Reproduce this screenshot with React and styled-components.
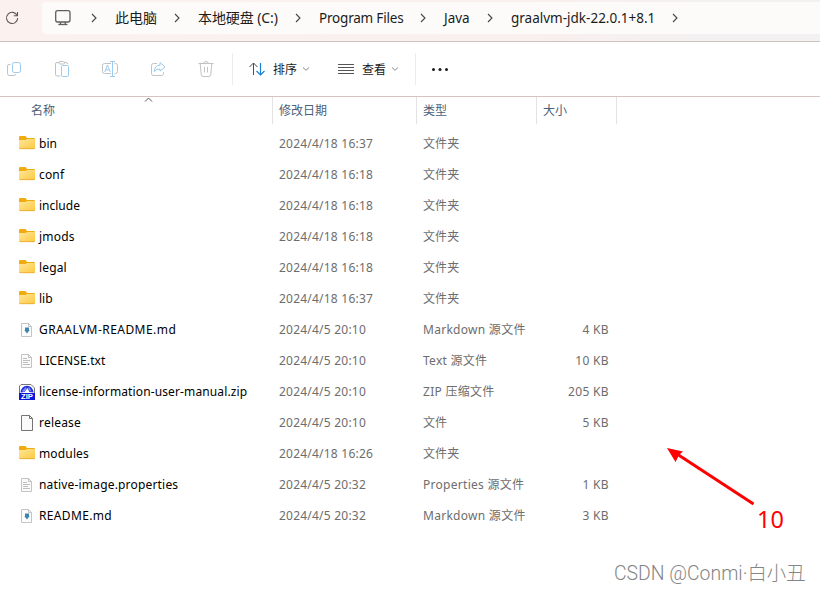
import React from "react";
import styled, { createGlobalStyle } from "styled-components";

const GlobalStyle = createGlobalStyle`
  * {
    box-sizing: border-box;
  }

  body {
    margin: 0;
    background: #fff;
    overflow: hidden;
    font-family: "Noto Sans", "Noto Sans CJK SC", sans-serif;
    font-size: 12px;
  }

  svg {
    display: block;
    flex: none;
  }
`;

const Window = styled.div`
  position: relative;
  width: 820px;
  height: 592px;
  background: #fff;
  overflow: hidden;
`;

const AddressBar = styled.div`
  height: 42px;
  display: flex;
  align-items: flex-start;
  padding: 2px 0 0 4px;
  background: linear-gradient(100deg, #fbf1ee 0%, #faf0ed 65%, #f3f1f1 85%);
  border-bottom: 1px solid #cfc3c1;
`;

const RefreshButton = styled.div`
  width: 38px;
  height: 31px;
  display: flex;
  align-items: center;
`;

const Breadcrumbs = styled.div`
  flex: 1;
  height: 32px;
  display: flex;
  align-items: center;
  padding-left: 12px;
  background: #fdfbfa;
  border-radius: 4px 0 0 4px;
`;

const Crumb = styled.span`
  width: ${(props) => props.$width}px;
  padding-left: 1px;
  font-size: ${(props) => props.$size || 13.5}px;
  line-height: 32px;
  letter-spacing: ${(props) => props.$spacing || 0}px;
  color: #1b1b1b;
  white-space: nowrap;
`;

const CrumbArrow = styled.span`
  width: 41px;
  display: flex;
  justify-content: center;
`;

const CommandBar = styled.div`
  height: 55px;
  display: flex;
  align-items: center;
  padding-left: 6px;
  border-bottom: 1px solid #d5c4c0;
`;

const IconButton = styled.div`
  width: 48px;
  height: 32px;
  display: flex;
  align-items: center;
`;

const Separator = styled.div`
  width: 1px;
  height: 32px;
  margin-left: ${(props) => props.$before}px;
  margin-right: ${(props) => props.$after}px;
  background: #ebebeb;
`;

const MenuButton = styled.div`
  width: ${(props) => props.$width}px;
  display: flex;
  align-items: center;
  color: #1b1b1b;
`;

const MenuLabel = styled.span`
  width: 24px;
  margin: 2px 5px 0 7px;
  line-height: 20px;
  white-space: nowrap;
`;

const HeaderRow = styled.div`
  height: 27px;
  display: flex;
`;

const HeaderCell = styled.div`
  position: relative;
  width: ${(props) => props.$width}px;
  padding-left: ${(props) => props.$indent || 6}px;
  border-right: 1px solid #e3e3e3;
  line-height: 27px;
  color: #4c607a;
`;

const SortMark = styled.span`
  position: absolute;
  top: 0;
  left: 144px;
`;

const FileList = styled.div`
  padding-top: 4px;
`;

const FileRow = styled.div`
  height: 31px;
  display: flex;
  align-items: center;
  line-height: 31px;
  white-space: nowrap;
  color: #6d6d6d;
`;

const NameCell = styled.div`
  width: 279px;
  display: flex;
  align-items: center;
  gap: 4px;
  padding-left: 19px;
  color: #000;
`;

const Name = styled.span`
  letter-spacing: ${(props) => props.$spacing || 0}px;
`;

const DateCell = styled.div`
  width: 144px;
  letter-spacing: 0.22px;
`;

const TypeCell = styled.div`
  width: 120px;
  letter-spacing: ${(props) => (props.$latin ? 0.28 : 0.1)}px;
`;

const SizeCell = styled.div`
  width: 66px;
  text-align: right;
  letter-spacing: 0.35px;
`;

const Annotation = styled.div`
  position: absolute;
  left: 665px;
  top: 444px;
`;

const AnnotationLabel = styled.div`
  position: absolute;
  left: 92px;
  top: 59px;
  font-size: 23.5px;
  line-height: 32px;
  color: #f00;
`;

const Watermark = styled.div`
  position: absolute;
  left: 614px;
  top: 561px;
  font-family: Roboto, "Noto Sans CJK SC", sans-serif;
  font-size: 19.4px;
  font-weight: 300;
  line-height: 26px;
  white-space: nowrap;
  color: #858585;
`;

const crumbs = [
  { label: "此电脑", width: 42, size: 14 },
  { label: "本地硬盘 (C:)", width: 80, size: 14, spacing: -0.1 },
  { label: "Program Files", width: 84, spacing: -0.2 },
  { label: "Java", width: 26 },
  { label: "graalvm-jdk-22.0.1+8.1", width: 144 },
];

const files = [
  { icon: "folder", name: "bin", date: "2024/4/18 16:37", type: "文件夹" },
  { icon: "folder", name: "conf", spacing: 0.15, date: "2024/4/18 16:18", type: "文件夹" },
  { icon: "folder", name: "include", date: "2024/4/18 16:18", type: "文件夹" },
  { icon: "folder", name: "jmods", spacing: 0.2, date: "2024/4/18 16:18", type: "文件夹" },
  { icon: "folder", name: "legal", spacing: 0.15, date: "2024/4/18 16:18", type: "文件夹" },
  { icon: "folder", name: "lib", date: "2024/4/18 16:37", type: "文件夹" },
  { icon: "markdown", name: "GRAALVM-README.md", spacing: 0.46, date: "2024/4/5 20:10", type: "Markdown 源文件", size: "4 KB" },
  { icon: "text", name: "LICENSE.txt", spacing: 0.12, date: "2024/4/5 20:10", type: "Text 源文件", size: "10 KB" },
  { icon: "zip", name: "license-information-user-manual.zip", spacing: 0.12, date: "2024/4/5 20:10", type: "ZIP 压缩文件", size: "205 KB" },
  { icon: "file", name: "release", spacing: 0.2, date: "2024/4/5 20:10", type: "文件", size: "5 KB" },
  { icon: "folder", name: "modules", spacing: 0.15, date: "2024/4/18 16:26", type: "文件夹" },
  { icon: "text", name: "native-image.properties", spacing: 0.18, date: "2024/4/5 20:32", type: "Properties 源文件", size: "1 KB" },
  { icon: "markdown", name: "README.md", spacing: 0.35, date: "2024/4/5 20:32", type: "Markdown 源文件", size: "3 KB" },
];

const FolderIcon = () => (
  <svg width="16" height="15" viewBox="0 0 16 15">
    <defs>
      <linearGradient id="folder" x1="0" y1="0" x2="1" y2="1">
        <stop offset="0" stopColor="#ffe69c" />
        <stop offset="1" stopColor="#fdc93f" />
      </linearGradient>
    </defs>
    <path d="M0 1.200Q0 0 1.200 0H6.500l1.500 2h6.800Q16 2 16 3v4H0z" fill="#f2ab0c" />
    <path d="M0 4h6.500L8 3h8v8.800q0 1.200-1.200 1.200H1.200Q0 13 0 11.800z" fill="url(#folder)" />
    <path d="M.3 12.100q.3.600 1 .6h13.400q.7 0 1-.6" fill="none" stroke="#e8a62a" strokeWidth=".8" />
  </svg>
);

const FileIcon = () => (
  <svg width="16" height="16" viewBox="0 0 16 16" fill="#fafafa" stroke="#757575">
    <path d="M2.500.5h8l3 3v12h-11z" />
    <path d="M10.500.5v3h3" fill="none" />
  </svg>
);

const TextIcon = () => (
  <svg width="16" height="16" viewBox="0 0 16 16" fill="#fafafa" stroke="#c4c4c4">
    <path d="M2.500 1.500h7l3 3v10h-10z" />
    <path d="M9.500 1.500v3h3M4 5.500h4M4 7.500h7M4 9.500h5M4 11.500h7" fill="none" stroke="#b5b8bb" strokeWidth=".9" />
  </svg>
);

const MarkdownIcon = () => (
  <svg width="16" height="16" viewBox="0 0 16 16" fill="#fcfcfc" stroke="#c4c4c4">
    <path d="M2.500 1.500h7l3 3v10h-10z" />
    <path d="M9.500 1.500v3h3" fill="none" />
    <path d="M6 5.500h4v2.500h.7L8 11.500 5.300 8H6z" fill="#3c86ac" stroke="none" />
  </svg>
);

const ZipLabel = styled.text`
  font-family: "Liberation Sans", sans-serif;
  font-size: 7.5px;
  font-weight: 700;
  fill: #fff;
`;

const ZipIcon = () => (
  <svg width="16" height="16" viewBox="0 0 16 16">
    <path d="M.5 15V2L2 .5H12L15.500 4v11z" fill="#fff" stroke="#777" />
    <path d="M1.500 8.500Q2.500 1.800 8 1.800t6.500 6.700L10.500 8 8.500 4 5.500 8z" fill="#2431dc" />
    <path d="M3 7l4-4 .5 1.500L5 8zM10.500 3.500l2 4-1.500-.5-2-3.500z" fill="#8b94ff" />
    <path d="M0 9h16v7H0z" fill="#0d16d9" />
    <ZipLabel x="2" y="15.200" textLength="12" lengthAdjust="spacingAndGlyphs">
      ZIP
    </ZipLabel>
  </svg>
);

const icons = {
  folder: FolderIcon,
  file: FileIcon,
  text: TextIcon,
  markdown: MarkdownIcon,
  zip: ZipIcon,
};

const RefreshIcon = () => (
  <svg width="16" height="16" viewBox="0 0 16 16" fill="none" stroke="#5c5958" strokeWidth="1.100">
    <path d="M13.200 5.600A5.600 5.600 0 1 0 13.700 8" />
    <path d="M13.500 2v3.700H9.800" />
  </svg>
);

const ComputerIcon = () => (
  <svg width="19" height="18" viewBox="0 0 19 18" fill="none" stroke="#5f5f5f" strokeWidth="1.300">
    <rect x="1.700" y="1.700" width="14.300" height="11.300" rx="2" />
    <path d="M6.500 13v2.500M11.200 13v2.500" />
    <path d="M4.300 15.500h9.200" />
  </svg>
);

const ChevronRight = () => (
  <svg width="6" height="10" viewBox="0 0 6 10" fill="none" stroke="#454545" strokeWidth="1.100">
    <path d="M1 1l4 4-4 4" />
  </svg>
);

const ChevronDown = () => (
  <svg width="8" height="6" viewBox="0 0 8 6" fill="none" stroke="#8a8a8a">
    <path d="M1 1.500l3 2.800 3-2.800" />
  </svg>
);

const CopyIcon = () => (
  <svg width="16" height="16" viewBox="0 0 16 16" fill="none">
    <path d="M4.500 3.500h-1.500q-1.500 0-1.500 1.500v7.500q0 2 2 2h4.500q1.500 0 1.500-1.500" stroke="#c2c2c2" />
    <rect x="6.500" y="1.500" width="8" height="10" rx="1.800" stroke="#9ccbee" />
  </svg>
);

const PasteIcon = () => (
  <svg width="18" height="18" viewBox="0 0 18 18" fill="none">
    <path d="M5 2.500H3Q1.500 2.500 1.500 4v10.500q0 1.500 1.500 1.500H6.500M10.500 2.500h1.500q1.500 0 1.500 1.500" stroke="#c2c2c2" />
    <rect x="5" y="1.500" width="5.500" height="2.500" rx="1" stroke="#c2c2c2" />
    <rect x="7.500" y="5.500" width="7" height="11" rx="1.300" stroke="#9ccbee" />
  </svg>
);

const RenameIcon = () => (
  <svg width="18" height="18" viewBox="0 0 18 18" fill="none">
    <path d="M9 3.500H2.500Q.5 3.500.5 5.500v6q0 2 2 2H9M12.500 3.500h1q2 0 2 2v6q0 2-2 2h-1" stroke="#c2c2c2" />
    <path d="M10.500 1.500v15M8 1.500h5M8 16.500h5M2.800 12l2.700-7 2.700 7M3.800 9.800h3.500" stroke="#9ccbee" />
  </svg>
);

const ShareIcon = () => (
  <svg width="18" height="18" viewBox="0 0 18 18" fill="none" strokeLinejoin="round">
    <path d="M7 3.500H3.500q-2 0-2 2v8q0 2 2 2h8q2 0 2-2V12" stroke="#c2c2c2" />
    <path d="M10 2.500l5 4.300-5 4.300V9Q6.500 8.800 4.300 11.500 4.500 5.500 10 5z" stroke="#9ccbee" />
  </svg>
);

const DeleteIcon = () => (
  <svg width="18" height="18" viewBox="0 0 18 18" fill="none" stroke="#c2c2c2">
    <path d="M.5 3.500h15M5.800 3.500Q5.800 1.500 8 1.500t2.200 2M2.200 3.500l1 11q.2 2 2 2h5.600q1.800 0 2-2l1-11M6.500 7v5.500M9.500 7v5.500" />
  </svg>
);

const SortIcon = () => (
  <svg width="17" height="16" viewBox="0 0 17 16" fill="none">
    <path d="M4.500 14V2M.5 6l4-4 4 4" stroke="#4d4d4d" />
    <path d="M11.500 2v12M7.500 10l4 4 4-4" stroke="#1a80d4" strokeWidth="1.200" />
  </svg>
);

const ViewIcon = () => (
  <svg width="17" height="12" viewBox="0 0 17 12" stroke="#555">
    <path d="M0 1.500h16M0 4.500h16M0 7.500h16M0 10.500h16" />
  </svg>
);

const MoreIcon = () => (
  <svg width="18" height="4" viewBox="0 0 18 4" fill="#1b1b1b">
    <circle cx="1.500" cy="2.500" r="1.500" />
    <circle cx="8" cy="2.500" r="1.500" />
    <circle cx="14.500" cy="2.500" r="1.500" />
  </svg>
);

export default function App() {
  return (
    <>
      <GlobalStyle />
      <Window>
        <AddressBar>
          <RefreshButton>
            <RefreshIcon />
          </RefreshButton>
          <Breadcrumbs>
            <ComputerIcon />
            {crumbs.map((crumb) => (
              <React.Fragment key={crumb.label}>
                <CrumbArrow>
                  <ChevronRight />
                </CrumbArrow>
                <Crumb $width={crumb.width} $size={crumb.size} $spacing={crumb.spacing}>
                  {crumb.label}
                </Crumb>
              </React.Fragment>
            ))}
            <CrumbArrow>
              <ChevronRight />
            </CrumbArrow>
          </Breadcrumbs>
        </AddressBar>

        <CommandBar>
          {[CopyIcon, PasteIcon, RenameIcon, ShareIcon, DeleteIcon].map((Icon, i) => (
            <IconButton key={i}>
              <Icon />
            </IconButton>
          ))}
          <Separator $before={-14} $after={16} />
          <MenuButton $width={89}>
            <SortIcon />
            <MenuLabel>排序</MenuLabel>
            <ChevronDown />
          </MenuButton>
          <MenuButton $width={77}>
            <ViewIcon />
            <MenuLabel>查看</MenuLabel>
            <ChevronDown />
          </MenuButton>
          <Separator $before={0} $after={16} />
          <MoreIcon />
        </CommandBar>

        <HeaderRow>
          <HeaderCell $width={273} $indent={31}>
            名称
            <SortMark>
              <svg width="9" height="5" viewBox="0 0 9 5" fill="none" stroke="#555">
                <path d="M1 4.500L4.500 1 8 4.500" />
              </svg>
            </SortMark>
          </HeaderCell>
          <HeaderCell $width={144}>修改日期</HeaderCell>
          <HeaderCell $width={120}>类型</HeaderCell>
          <HeaderCell $width={80}>大小</HeaderCell>
        </HeaderRow>

        <FileList>
          {files.map((file) => {
            const Icon = icons[file.icon];
            return (
              <FileRow key={file.name}>
                <NameCell>
                  <Icon />
                  <Name $spacing={file.spacing}>{file.name}</Name>
                </NameCell>
                <DateCell>{file.date}</DateCell>
                <TypeCell $latin={file.type.includes(" ")}>{file.type}</TypeCell>
                <SizeCell>{file.size}</SizeCell>
              </FileRow>
            );
          })}
        </FileList>

        <Annotation>
          <svg width="92" height="64" viewBox="0 0 92 64">
            <path d="M12 10l76.500 50" stroke="#f00" strokeWidth="3" />
            <path d="M2 4l16 3.500-4 3.500-3.500 7z" fill="#f00" />
          </svg>
          <AnnotationLabel>10</AnnotationLabel>
        </Annotation>
        <Watermark>CSDN @Conmi·白小丑</Watermark>
      </Window>
    </>
  );
}
